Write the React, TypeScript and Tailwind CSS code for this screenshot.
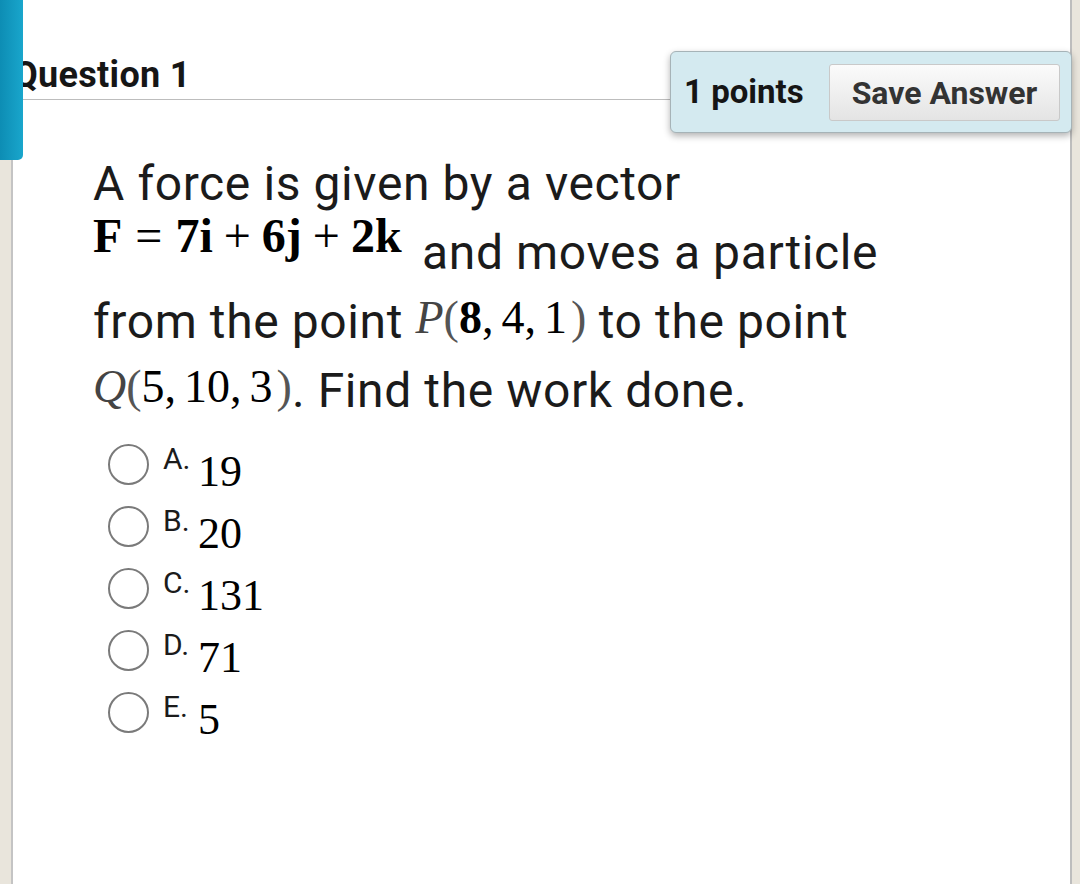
const options = [
  { key: "A.", value: "19" },
  { key: "B.", value: "20" },
  { key: "C.", value: "131" },
  { key: "D.", value: "71" },
  { key: "E.", value: "5" },
];

const serif = "font-['Liberation_Serif','Times_New_Roman',serif]";

const App = () => {
  return (
    <div className="relative flex h-[884px] w-[1080px] overflow-hidden bg-white font-['Roboto','Noto_Sans',sans-serif] text-[#1b1b1b]">
      {/* left rail */}
      <div className="w-[13px] shrink-0 border-r-2 border-[#c4c4c4] bg-[#e9e5dc]" />

      {/* blue tab */}
      <div className="absolute left-0 top-0 z-10 h-[160px] w-[23px] rounded-br-[5px] bg-gradient-to-r from-[#0d8db4] to-[#19a6cc]" />

      {/* Main */}
      <div className="flex-1">
        {/* Header */}
        <div className="flex items-start pt-[51px]">
          <div className="h-[49px] flex-1 border-b border-[#bdbdbd] pt-[6px]">
            <h2 className="text-[36px] font-bold leading-[36px] tracking-[0.3px] text-[#161616]">Question 1</h2>
          </div>
          <div className="relative z-10 mr-[-2px] flex h-[82px] w-[402px] items-start rounded-[6px] border border-[#a6b3b7] bg-[#d4eaf0] pl-[13px] shadow-[0_3px_7px_rgba(0,0,0,0.3)]">
            <span className="mt-[23px] text-[33px] font-bold leading-[33px] text-[#151515]">1 points</span>
            <button className="ml-auto mr-[11px] mt-[12px] h-[57px] w-[231px] rounded-[3px] border border-[#c9c9c9] bg-gradient-to-b from-[#fbfbfb] to-[#e4e4e4] text-[32px] font-bold text-[#333]">
              Save Answer
            </button>
          </div>
        </div>

        {/* Question text */}
        <p className="mt-[16px] pl-[80px] text-[48px] leading-[69px] tracking-[0.6px]">
          A force is given by a vector
          <br />
          <span className={`${serif} align-[17px] text-[48px] leading-[30px] tracking-normal text-black`}>
            <b>F</b>
            <span className="mx-[13px]">=</span>
            <b>7i</b>
            <span className="mx-[11px]">+</span>
            <b>6j</b>
            <span className="mx-[11px]">+</span>
            <b>2k</b>
          </span>{" "}
          <span className="ml-[8px]">and moves a particle</span>
          <br />
          from the point{" "}
          <span className={`${serif} align-[5px] text-[46px] leading-[30px] tracking-normal text-black`}>
            <i className="text-[#444]">P</i>
            <span className="text-[#555]">(</span>
            <b>8</b>,<span className="ml-[8px]">4</span>,<span className="ml-[8px]">1</span>
            <span className="ml-[4px] text-[#555]">)</span>
          </span>{" "}
          to the point
          <br />
          <span className={`${serif} align-[5px] text-[46px] leading-[30px] tracking-normal text-black`}>
            <i className="text-[#444]">Q</i>
            <span className="text-[#555]">(</span>5,<span className="ml-[8px]">10</span>,<span className="ml-[8px]">3</span>
            <span className="ml-[4px] text-[#555]">)</span>
          </span>
          . Find the work done.
        </p>

        {/* Options */}
        <div className="mt-[19px] pl-[95px]">
          {options.map((opt) => (
            <div key={opt.key} className="flex h-[62px] items-start">
              <span className="h-[41px] w-[41px] shrink-0 rounded-full border-2 border-[#7a7a7a]" />
              <span className="ml-[14px] w-[35px] text-[30px] leading-[30px]">{opt.key}</span>
              <span className={`${serif} mt-[6px] text-[44px] leading-[44px] text-black`}>{opt.value}</span>
            </div>
          ))}
        </div>
      </div>

      {/* right rail */}
      <div className="w-[10px] shrink-0 border-l-2 border-[#bdbdbd] bg-[#e9e5dc]" />
    </div>
  );
};

export default App;
